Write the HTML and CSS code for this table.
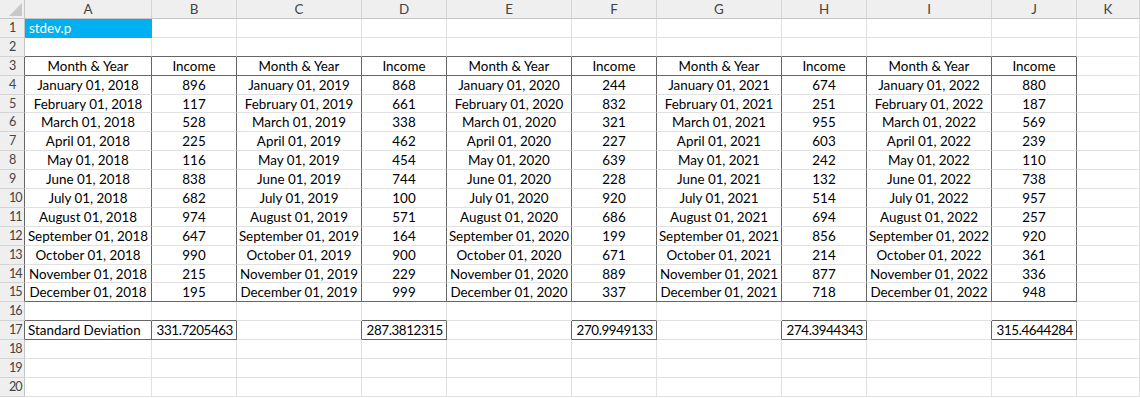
FILE: index.html
```html
<!DOCTYPE html>
<html>
<head>
<meta charset="utf-8">
<link rel="stylesheet" href="styles.css">
</head>
<body>
<div class="sheet">
  <div class="row hdr">
    <div class="corner"><span class="tri"></span></div>
    <div class="ch">A</div><div class="ch">B</div><div class="ch">C</div><div class="ch">D</div><div class="ch">E</div><div class="ch">F</div><div class="ch">G</div><div class="ch">H</div><div class="ch">I</div><div class="ch">J</div><div class="ch">K</div>
  </div>
  <div class="row">
    <div class="rh">1</div><div class="c hl">stdev.p</div><div class="c"></div><div class="c"></div><div class="c"></div><div class="c"></div><div class="c"></div><div class="c"></div><div class="c"></div><div class="c"></div><div class="c"></div><div class="c"></div>
  </div>
  <div class="row r-top">
    <div class="rh">2</div><div class="c t"></div><div class="c t"></div><div class="c t"></div><div class="c t"></div><div class="c t"></div><div class="c t"></div><div class="c t"></div><div class="c t"></div><div class="c t"></div><div class="c t"></div><div class="c"></div>
  </div>
  <div class="row r-tbl r-head">
    <div class="rh">3</div><div class="c t">Month &amp; Year</div><div class="c t">Income</div><div class="c t">Month &amp; Year</div><div class="c t">Income</div><div class="c t">Month &amp; Year</div><div class="c t">Income</div><div class="c t">Month &amp; Year</div><div class="c t">Income</div><div class="c t">Month &amp; Year</div><div class="c t">Income</div><div class="c"></div>
  </div>
  <div class="row r-tbl">
    <div class="rh">4</div><div class="c t">January 01, 2018</div><div class="c t">896</div><div class="c t">January 01, 2019</div><div class="c t">868</div><div class="c t">January 01, 2020</div><div class="c t">244</div><div class="c t">January 01, 2021</div><div class="c t">674</div><div class="c t">January 01, 2022</div><div class="c t">880</div><div class="c"></div>
  </div>
  <div class="row r-tbl">
    <div class="rh">5</div><div class="c t">February 01, 2018</div><div class="c t">117</div><div class="c t">February 01, 2019</div><div class="c t">661</div><div class="c t">February 01, 2020</div><div class="c t">832</div><div class="c t">February 01, 2021</div><div class="c t">251</div><div class="c t">February 01, 2022</div><div class="c t">187</div><div class="c"></div>
  </div>
  <div class="row r-tbl">
    <div class="rh">6</div><div class="c t">March 01, 2018</div><div class="c t">528</div><div class="c t">March 01, 2019</div><div class="c t">338</div><div class="c t">March 01, 2020</div><div class="c t">321</div><div class="c t">March 01, 2021</div><div class="c t">955</div><div class="c t">March 01, 2022</div><div class="c t">569</div><div class="c"></div>
  </div>
  <div class="row r-tbl">
    <div class="rh">7</div><div class="c t">April 01, 2018</div><div class="c t">225</div><div class="c t">April 01, 2019</div><div class="c t">462</div><div class="c t">April 01, 2020</div><div class="c t">227</div><div class="c t">April 01, 2021</div><div class="c t">603</div><div class="c t">April 01, 2022</div><div class="c t">239</div><div class="c"></div>
  </div>
  <div class="row r-tbl">
    <div class="rh">8</div><div class="c t">May 01, 2018</div><div class="c t">116</div><div class="c t">May 01, 2019</div><div class="c t">454</div><div class="c t">May 01, 2020</div><div class="c t">639</div><div class="c t">May 01, 2021</div><div class="c t">242</div><div class="c t">May 01, 2022</div><div class="c t">110</div><div class="c"></div>
  </div>
  <div class="row r-tbl">
    <div class="rh">9</div><div class="c t">June 01, 2018</div><div class="c t">838</div><div class="c t">June 01, 2019</div><div class="c t">744</div><div class="c t">June 01, 2020</div><div class="c t">228</div><div class="c t">June 01, 2021</div><div class="c t">132</div><div class="c t">June 01, 2022</div><div class="c t">738</div><div class="c"></div>
  </div>
  <div class="row r-tbl">
    <div class="rh">10</div><div class="c t">July 01, 2018</div><div class="c t">682</div><div class="c t">July 01, 2019</div><div class="c t">100</div><div class="c t">July 01, 2020</div><div class="c t">920</div><div class="c t">July 01, 2021</div><div class="c t">514</div><div class="c t">July 01, 2022</div><div class="c t">957</div><div class="c"></div>
  </div>
  <div class="row r-tbl">
    <div class="rh">11</div><div class="c t">August 01, 2018</div><div class="c t">974</div><div class="c t">August 01, 2019</div><div class="c t">571</div><div class="c t">August 01, 2020</div><div class="c t">686</div><div class="c t">August 01, 2021</div><div class="c t">694</div><div class="c t">August 01, 2022</div><div class="c t">257</div><div class="c"></div>
  </div>
  <div class="row r-tbl">
    <div class="rh">12</div><div class="c t">September 01, 2018</div><div class="c t">647</div><div class="c t">September 01, 2019</div><div class="c t">164</div><div class="c t">September 01, 2020</div><div class="c t">199</div><div class="c t">September 01, 2021</div><div class="c t">856</div><div class="c t">September 01, 2022</div><div class="c t">920</div><div class="c"></div>
  </div>
  <div class="row r-tbl">
    <div class="rh">13</div><div class="c t">October 01, 2018</div><div class="c t">990</div><div class="c t">October 01, 2019</div><div class="c t">900</div><div class="c t">October 01, 2020</div><div class="c t">671</div><div class="c t">October 01, 2021</div><div class="c t">214</div><div class="c t">October 01, 2022</div><div class="c t">361</div><div class="c"></div>
  </div>
  <div class="row r-tbl">
    <div class="rh">14</div><div class="c t">November 01, 2018</div><div class="c t">215</div><div class="c t">November 01, 2019</div><div class="c t">229</div><div class="c t">November 01, 2020</div><div class="c t">889</div><div class="c t">November 01, 2021</div><div class="c t">877</div><div class="c t">November 01, 2022</div><div class="c t">336</div><div class="c"></div>
  </div>
  <div class="row r-tbl r-last">
    <div class="rh">15</div><div class="c t">December 01, 2018</div><div class="c t">195</div><div class="c t">December 01, 2019</div><div class="c t">999</div><div class="c t">December 01, 2020</div><div class="c t">337</div><div class="c t">December 01, 2021</div><div class="c t">718</div><div class="c t">December 01, 2022</div><div class="c t">948</div><div class="c"></div>
  </div>
  <div class="row">
    <div class="rh">16</div><div class="c bb"></div><div class="c bb"></div><div class="c"></div><div class="c bb"></div><div class="c"></div><div class="c bb"></div><div class="c"></div><div class="c bb"></div><div class="c"></div><div class="c bb"></div><div class="c"></div>
  </div>
  <div class="row">
    <div class="rh brd">17</div><div class="c left br bb">Standard Deviation</div><div class="c num br bb">331.7205463</div><div class="c br"></div><div class="c num br bb">287.3812315</div><div class="c br"></div><div class="c num br bb">270.9949133</div><div class="c br"></div><div class="c num br bb">274.3944343</div><div class="c br"></div><div class="c num br bb">315.4644284</div><div class="c"></div>
  </div>
  <div class="row">
    <div class="rh">18</div><div class="c"></div><div class="c"></div><div class="c"></div><div class="c"></div><div class="c"></div><div class="c"></div><div class="c"></div><div class="c"></div><div class="c"></div><div class="c"></div><div class="c"></div>
  </div>
  <div class="row">
    <div class="rh">19</div><div class="c"></div><div class="c"></div><div class="c"></div><div class="c"></div><div class="c"></div><div class="c"></div><div class="c"></div><div class="c"></div><div class="c"></div><div class="c"></div><div class="c"></div>
  </div>
  <div class="row">
    <div class="rh">20</div><div class="c"></div><div class="c"></div><div class="c"></div><div class="c"></div><div class="c"></div><div class="c"></div><div class="c"></div><div class="c"></div><div class="c"></div><div class="c"></div><div class="c"></div>
  </div>
</div>
</body>
</html>
```
FILE: styles.css
```css
html, body {
  margin: 0;
  padding: 0;
  background: #ffffff;
}

.sheet {
  width: 1140px;
  height: 398px;
  overflow: hidden;
  font-family: "Lato", "Liberation Sans", sans-serif;
  font-size: 13.4px;
  color: #000;
}

.row {
  display: grid;
  grid-template-columns: 25px 127px 85px 125px 85px 125px 85px 125px 85px 125px 85px 63px;
  height: 18.9px;
}

.row.hdr {
  height: 19px;
}

.corner,
.ch,
.rh {
  background: #efefef;
  color: #444;
  box-sizing: border-box;
}

.corner {
  position: relative;
  border-right: 1px solid #c6c6c6;
  border-bottom: 1px solid #c6c6c6;
}

.tri {
  position: absolute;
  right: 2px;
  bottom: 2px;
  width: 13px;
  height: 13px;
  background: #c8c8c8;
  clip-path: polygon(100% 0, 100% 100%, 0 100%);
}

.ch {
  display: flex;
  align-items: center;
  justify-content: center;
  border-right: 1px solid #d4d4d4;
  border-bottom: 1px solid #c6c6c6;
  line-height: 18px;
}

.rh {
  display: flex;
  align-items: center;
  padding-left: 9px;
  border-right: 1px solid #c6c6c6;
  border-bottom: 1px solid #d4d4d4;
  line-height: 18px;
  font-size: 12.6px;
  letter-spacing: -1px;
  white-space: nowrap;
  overflow: hidden;
}

.c {
  box-sizing: border-box;
  display: flex;
  align-items: center;
  justify-content: center;
  padding: 0 3px;
  border-right: 1px solid #e1e1e1;
  border-bottom: 1px solid #e1e1e1;
  white-space: nowrap;
  overflow: hidden;
  line-height: 18px;
}

.c.left {
  justify-content: flex-start;
}

.c.num {
  justify-content: flex-end;
  padding-right: 3px;
  letter-spacing: -0.4px;
}

.c.hl {
  justify-content: flex-start;
  background: #00b0f0;
  color: #ffffff;
  padding-left: 4px;
  border-right-color: #00b0f0;
  border-bottom-color: #00b0f0;
}

/* table borders */
.r-top .t,
.r-head .t,
.r-last .t,
.c.bb {
  border-bottom-color: #666;
}

.r-tbl .t,
.c.br {
  border-right-color: #666;
}

.r-tbl .rh,
.rh.brd {
  border-right-color: #666;
}
```
